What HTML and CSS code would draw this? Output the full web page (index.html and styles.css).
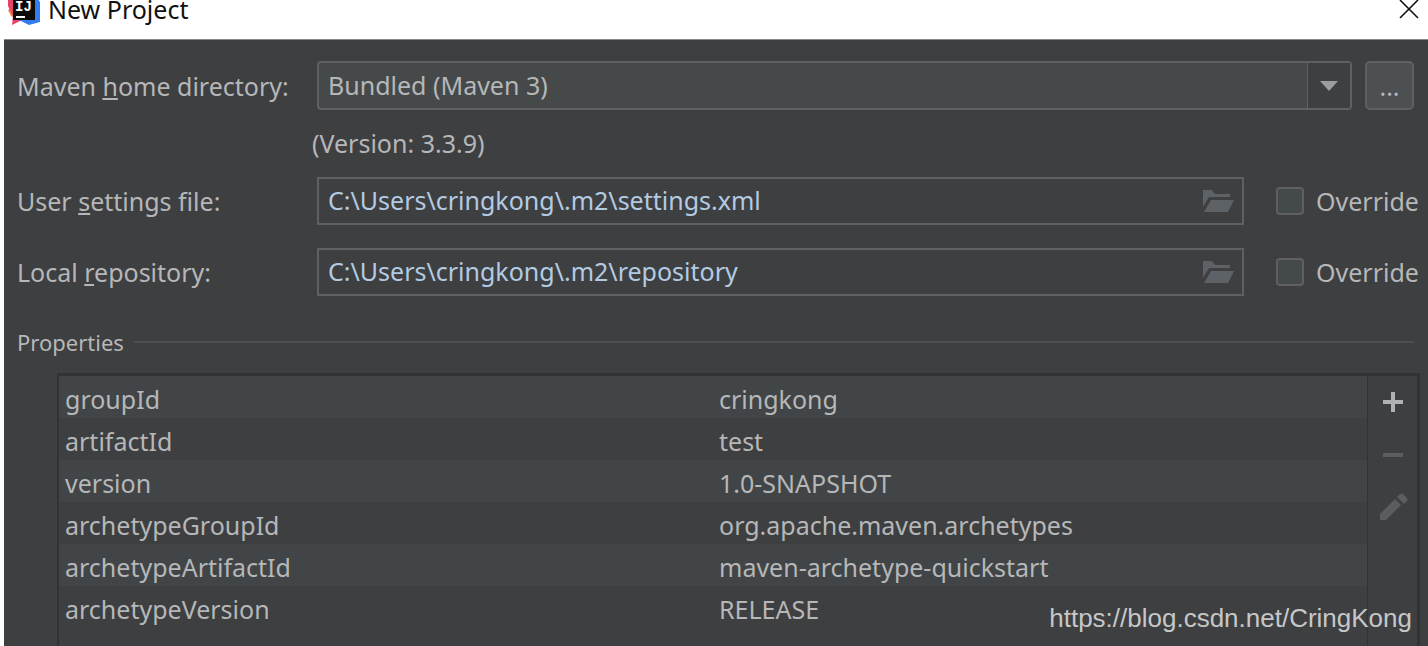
FILE: index.html
```html
<!DOCTYPE html>
<html lang="en">
<head>
    <meta charset="UTF-8">
    <meta name="viewport" content="width=device-width, initial-scale=1.0">
    <title>New Project</title>
    <link rel="stylesheet" href="styles.css">
</head>
<body>
    <header class="titlebar">
        <svg class="logo" width="34" height="34" viewBox="0 0 34 34" aria-hidden="true">
            <path fill="#f0883a" d="M1 18 L10 12 L10 28 L4 24 Z"/>
            <path fill="#e8416b" d="M1 8 L12 4 L20 24 L15 28 L5 33 L6 24 L1 14 Z"/>
            <path fill="#2f7df0" d="M18 4 L28 3 L33 10 L33 30 L22 33 L12 28 Z"/>
            <rect x="6" y="6" width="22" height="22" fill="#0b0b0b"/>
            <text class="logo-text" x="8" y="19">IJ</text>
            <rect x="9" y="24" width="9" height="2" fill="#fff"/>
        </svg>
        <h1>New Project</h1>
        <button type="button" class="close" aria-label="Close">
            <svg width="20" height="20" viewBox="0 0 20 20"><path d="M1 1 L19 19 M19 1 L1 19" stroke="#111" stroke-width="1.6" fill="none"/></svg>
        </button>
    </header>

    <main class="dialog">
        <form class="settings">
            <div class="row">
                <label class="row-label" for="maven-home">Maven <u>h</u>ome directory:</label>
                <div class="combo">
                    <select id="maven-home">
                        <option>Bundled (Maven 3)</option>
                    </select>
                    <span class="combo-arrow"></span>
                </div>
                <button type="button" class="browse">...</button>
            </div>
            <p class="version">(Version: 3.3.9)</p>
            <div class="row">
                <label class="row-label" for="user-settings">User <u>s</u>ettings file:</label>
                <div class="path-field">
                    <input type="text" id="user-settings" value="C:\Users\cringkong\.m2\settings.xml">
                    <svg class="folder" width="32" height="24" viewBox="0 0 32 24" aria-hidden="true"><path d="M1 1 H10 L13 5 H28 V8 H7 L1 18 Z M9 11 H32 L26 23 H2 Z"/></svg>
                </div>
                <label class="override"><input type="checkbox">Override</label>
            </div>
            <div class="row">
                <label class="row-label" for="local-repo">Local <u>r</u>epository:</label>
                <div class="path-field">
                    <input type="text" id="local-repo" value="C:\Users\cringkong\.m2\repository">
                    <svg class="folder" width="32" height="24" viewBox="0 0 32 24" aria-hidden="true"><path d="M1 1 H10 L13 5 H28 V8 H7 L1 18 Z M9 11 H32 L26 23 H2 Z"/></svg>
                </div>
                <label class="override"><input type="checkbox">Override</label>
            </div>
        </form>

        <h2 class="section-title">Properties</h2>

        <div class="properties">
            <table>
                <tbody>
                    <tr><td>groupId</td><td>cringkong</td></tr>
                    <tr><td>artifactId</td><td>test</td></tr>
                    <tr><td>version</td><td>1.0-SNAPSHOT</td></tr>
                    <tr><td>archetypeGroupId</td><td>org.apache.maven.archetypes</td></tr>
                    <tr><td>archetypeArtifactId</td><td>maven-archetype-quickstart</td></tr>
                    <tr><td>archetypeVersion</td><td>RELEASE</td></tr>
                </tbody>
            </table>
            <div class="tools">
                <button type="button" aria-label="Add">
                    <svg width="32" height="32" viewBox="0 0 32 32"><path d="M6 16 H26 M16 6 V26" stroke="#afb1b3" stroke-width="4"/></svg>
                </button>
                <button type="button" aria-label="Remove" disabled>
                    <svg width="32" height="32" viewBox="0 0 32 32"><path d="M6 16 H26" stroke="#5c5d5e" stroke-width="4"/></svg>
                </button>
                <button type="button" aria-label="Edit" disabled>
                    <svg width="32" height="32" viewBox="0 0 32 32"><path d="M3 22 L18 7 L24 13 L9 28 H3 Z M20 5 L23 2 Q25 1 26 2 L30 6 Q31 8 30 9 L27 12 Z" fill="#5c5d5e"/></svg>
                </button>
            </div>
        </div>
    </main>
    <a class="watermark" href="https://blog.csdn.net/CringKong">https://blog.csdn.net/CringKong</a>
</body>
</html>
```
FILE: styles.css
```css
:root {
    --bg: #3e3f41;
    --border: #5e6062;
    --field: #45494a;
    --stripe: #414547;
    --dark: #323334;
    --text: #b6b7b8;
}

* {
    box-sizing: border-box;
}

body {
    margin: 0;
    height: 100vh;
    display: flex;
    flex-direction: column;
    position: relative;
    overflow: hidden;
    background: #fff;
    color: var(--text);
    font-family: "Noto Sans", "Open Sans", sans-serif;
    font-size: 25px;
    line-height: 32px;
}

button, input, select {
    font: inherit;
    color: inherit;
}

button {
    border: none;
    padding: 0;
    background: none;
}

/* the top of the title bar is scrolled out of view */
.titlebar {
    flex: none;
    height: 60px;
    margin-top: -21px;
    padding: 0 8px 0 7px;
    display: flex;
    align-items: center;
    gap: 7px;
    color: #111;
}

.titlebar h1 {
    flex: 1;
    margin: 0;
    font-size: 25px;
    font-weight: 400;
}

.logo-text {
    font: bold 14px "Liberation Mono", monospace;
    fill: #fff;
}

.close {
    display: flex;
    padding: 0 1px;
}

.dialog {
    flex: 1;
    margin-left: 4px;
    padding: 21px 8px 0 13px;
    display: flex;
    flex-direction: column;
    border-top: 1px solid #85878a;
    background: var(--bg);
}

.row {
    display: flex;
    align-items: center;
    height: 49px;
}

.row + .row {
    margin-top: 22px;
}

.row-label {
    flex: none;
    width: 300px;
}

u {
    text-decoration-thickness: 2px;
    text-underline-offset: 2px;
}

.combo {
    flex: 1;
    position: relative;
    height: 49px;
}

.combo select {
    width: 100%;
    height: 100%;
    padding: 0 52px 2px 9px;
    appearance: none;
    border: 2px solid var(--border);
    border-radius: 4px;
    background: var(--field);
}

.combo-arrow {
    position: absolute;
    top: 2px;
    right: 2px;
    bottom: 2px;
    width: 43px;
    display: flex;
    align-items: center;
    justify-content: center;
    border-left: 1px solid var(--border);
    background: var(--bg);
    pointer-events: none;
}

.combo-arrow::before {
    content: "";
    border: 9px solid transparent;
    border-top: 10px solid #9b9da0;
    border-bottom: none;
}

.browse {
    width: 49px;
    height: 49px;
    margin: 0 6px 0 13px;
    border: 2px solid var(--border);
    border-radius: 5px;
    background: #4c5052;
}

.version {
    margin: 17px 0 17px 295px;
}

.path-field {
    flex: 1;
    height: 48px;
    display: flex;
    align-items: center;
    padding-right: 8px;
    border: 2px solid var(--border);
}

.path-field input {
    flex: 1;
    min-width: 0;
    padding: 0 9px 2px;
    border: none;
    outline: none;
    background: none;
    color: #b3cbe2;
}

.folder {
    fill: #5d6266;
}

.override {
    flex: none;
    width: 176px;
    padding-left: 32px;
    display: flex;
    align-items: center;
    gap: 12px;
}

.override input {
    appearance: none;
    width: 28px;
    height: 28px;
    margin: 0;
    border: 2px solid var(--border);
    border-radius: 4px;
    background: #434a49;
}

.section-title {
    margin: 30px 6px 0 0;
    display: flex;
    align-items: center;
    gap: 10px;
    font-size: 22px;
    font-weight: 400;
}

.section-title::after {
    content: "";
    flex: 1;
    height: 2px;
    background: #4c4e50;
}

.properties {
    flex: 1;
    margin: 15px 0 0 40px;
    display: flex;
    align-items: flex-start;
    border: 3px solid var(--dark);
    border-width: 3px 3px 0 2px;
}

table {
    flex: 1;
    table-layout: fixed;
    border-collapse: collapse;
}

td {
    width: 50%;
    height: 42px;
    padding: 4px 0 0 6px;
}

tr:nth-child(odd) {
    background: var(--stripe);
}

.tools {
    align-self: stretch;
    width: 50px;
    padding-top: 10px;
    display: flex;
    flex-direction: column;
    align-items: center;
    gap: 21px;
    border-left: 1px solid var(--dark);
}

.tools button {
    display: flex;
}

.watermark {
    position: absolute;
    right: 16px;
    bottom: 12px;
    color: #c6c7c8;
    font-family: "Liberation Sans", Arial, sans-serif;
    font-size: 26px;
    text-decoration: none;
}
```
